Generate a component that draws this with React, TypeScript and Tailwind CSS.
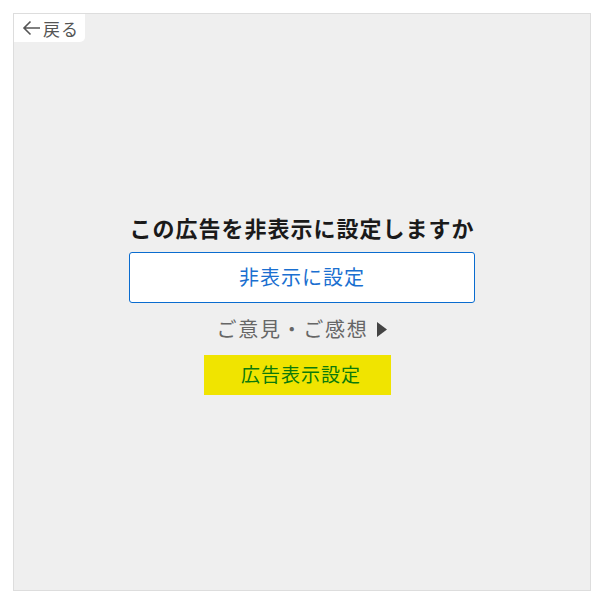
import React from "react";

const App = () => {
  return (
    <div
      className="w-[604px] h-[604px] bg-white p-[13px]"
      style={{ fontFamily: '"Noto Sans CJK JP", "Noto Sans", sans-serif' }}
    >
      <div className="relative w-[578px] h-[578px] bg-[#efefef] border border-[#dddddd] flex flex-col items-center justify-center">
        <button className="absolute left-0 top-0 flex items-center h-[28px] pl-[8px] pr-[6px] bg-white rounded-br-[5px] text-[17px] leading-none text-[#555555]">
          <svg width="19" height="16" viewBox="0 0 19 16" fill="none" stroke="#555555" strokeWidth="1.6">
            <path d="M18 8H2M8.5 1.5L2 8l6.5 6.5" />
          </svg>
          <span className="ml-[2px] tracking-[1px]">戻る</span>
        </button>

        <div className="flex flex-col items-center mt-[6px] mb-[3px]">
          <h1 className="text-[22px] tracking-[1px] font-bold text-[#1a1a1a] leading-[28px]">
            この広告を非表示に設定しますか
          </h1>
          <button className="mt-[11px] w-[346px] h-[51px] bg-white border border-[#0a6ccf] rounded-[3px] text-[20px] tracking-[1px] text-[#1a6fd0]">
            非表示に設定
          </button>
          <div className="mt-[12px] flex items-center text-[20px] tracking-[1.7px] text-[#666666] leading-[28px]">
            <span>ご意見・ご感想</span>
            <svg className="ml-[9px] mt-[2px]" width="10" height="15" viewBox="0 0 10 15">
              <path d="M0 0L10 7.5L0 15Z" fill="#444444" />
            </svg>
          </div>
          <button className="mt-[12px] mr-[10px] pl-[8px] w-[187px] h-[40px] bg-[#f0e400] text-[19px] tracking-[1px] text-[#0b7a0b]">
            広告表示設定
          </button>
        </div>
      </div>
    </div>
  );
};

export default App;
